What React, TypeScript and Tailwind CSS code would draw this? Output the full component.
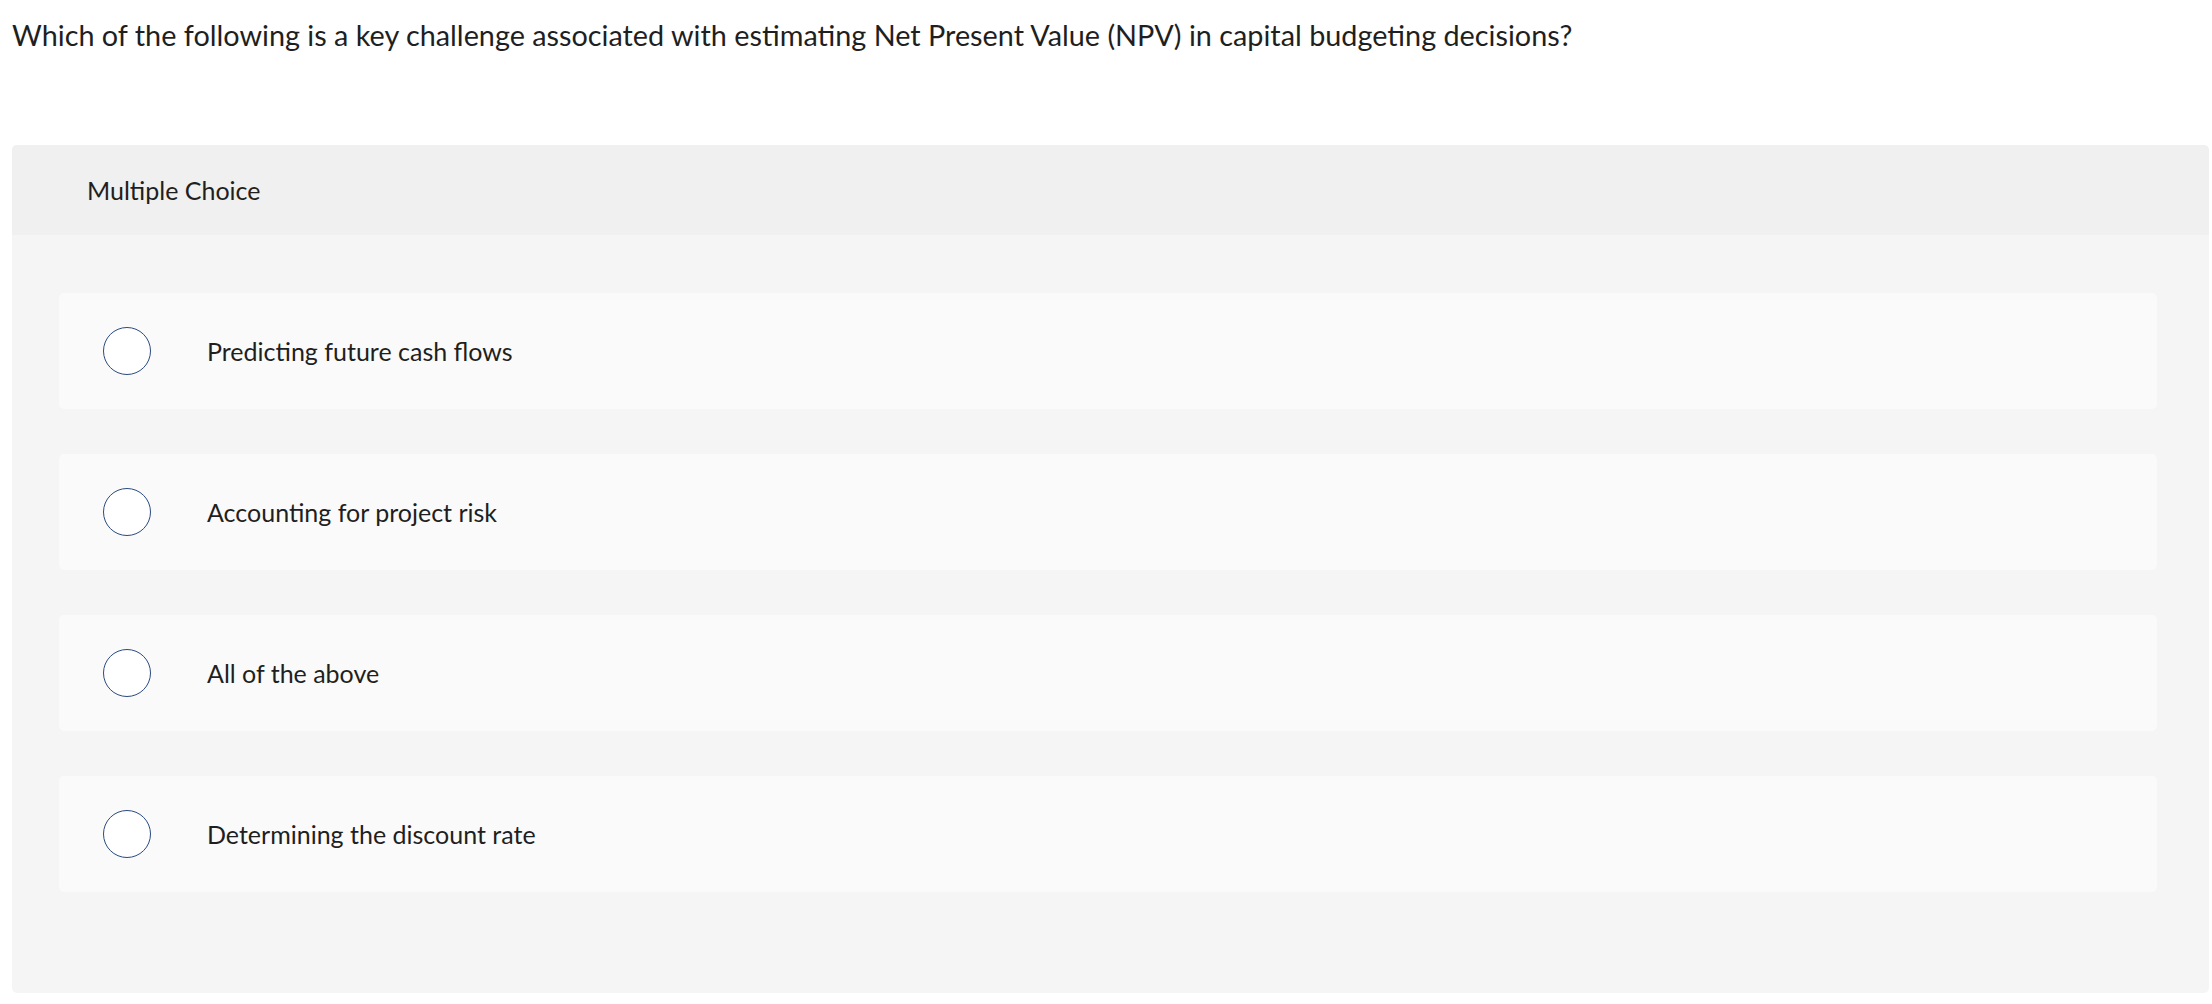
const options = [
  "Predicting future cash flows",
  "Accounting for project risk",
  "All of the above",
  "Determining the discount rate",
];

function OptionRow({ label }: { label: string }) {
  return (
    <label className="flex h-[116px] cursor-pointer items-center rounded-[5px] bg-[#fafafa]">
      <span className="ml-[44px] h-[48px] w-[48px] shrink-0 rounded-full border border-[#2a4a80] bg-white" />
      <span className="ml-[56px] pt-[2px] text-[25px] text-[#1f1f1f]">{label}</span>
    </label>
  );
}

export default function App() {
  return (
    <div className="min-h-screen bg-white font-['Lato','Open_Sans',sans-serif]">
      <p className="px-[12px] pt-[15px] text-[28.8px] leading-[40px] text-[#1f1f1f]">
        Which of the following is a key challenge associated with estimating Net Present Value (NPV) in capital budgeting decisions?
      </p>
      <section className="ml-[12px] mr-[3px] mt-[90px] overflow-hidden rounded-[5px] bg-[#f5f5f5]">
        <div className="flex h-[90px] items-center bg-[#f0f0f0] pl-[75px] pt-[2px] text-[25px] text-[#1f1f1f]">
          Multiple Choice
        </div>
        <div className="flex flex-col gap-[45px] pb-[101px] pl-[47px] pr-[52px] pt-[58px]">
          {options.map((o) => (
            <OptionRow key={o} label={o} />
          ))}
        </div>
      </section>
    </div>
  );
}
